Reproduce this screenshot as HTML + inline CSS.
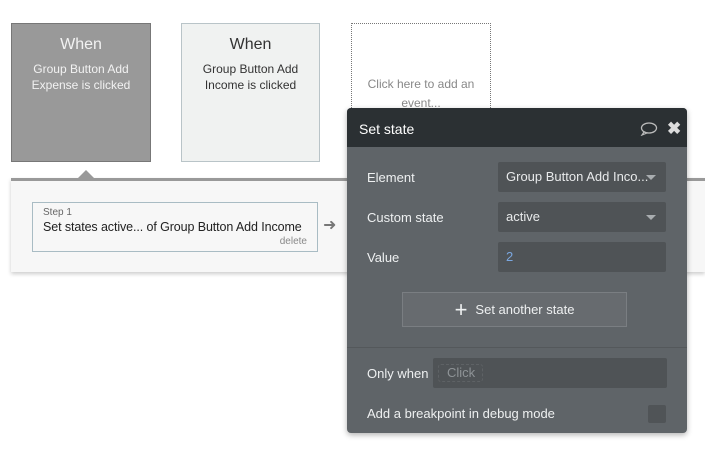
<html><head><style>
body{margin:0;width:705px;height:452px;background:#fff;font-family:"Liberation Sans",sans-serif;position:relative;overflow:hidden}
div{position:absolute;box-sizing:border-box}
.lbl{color:#eef0f1;font-size:13px;left:20px}
.inp{background:#4f5356;border-radius:2px;color:#e8eaeb;font-size:13px;padding-left:8px;line-height:30px}
.car{width:0;height:0;border-left:5px solid transparent;border-right:5px solid transparent;border-top:5px solid #a9adb0;right:10px;top:13px}
</style></head><body>
<div style="left:11px;top:23px;width:140px;height:139px;background:#999;border:1px solid #777;color:#f2f2f2;text-align:center">
<div style="left:0;right:0;top:12px;font-size:16px">When</div>
<div style="left:0;right:0;top:37px;font-size:12px;line-height:16px">Group Button Add<br>Expense is clicked</div></div>
<div style="left:181px;top:23px;width:139px;height:139px;background:#f0f2f1;border:1px solid #b9c4c8;color:#333;text-align:center">
<div style="left:0;right:0;top:12px;font-size:16px">When</div>
<div style="left:0;right:0;top:37px;font-size:12px;line-height:16px">Group Button Add<br>Income is clicked</div></div>
<div style="left:351px;top:23px;width:140px;height:139px;border:1px dotted #777;color:#888;text-align:center">
<div style="left:0;right:0;top:51px;font-size:12px;line-height:19px">Click here to add an<br>event...</div></div>
<div style="left:11px;top:178px;width:694px;height:94px;background:#f7f7f7;border-top:3px solid #999;box-shadow:0 2px 4px rgba(0,0,0,.2)"></div>
<div style="left:78px;top:170px;width:0;height:0;border-left:8px solid transparent;border-right:8px solid transparent;border-bottom:8px solid #999"></div>
<div style="left:32px;top:202px;width:286px;height:50px;border:1px solid #a9bcc4;background:#f7f7f7">
<div style="left:10px;top:4px;font-size:10px;color:#666">Step 1</div>
<div style="left:10px;top:17px;font-size:12.5px;color:#222;letter-spacing:-0.1px">Set states active... of Group Button Add Income</div>
<div style="right:10px;top:33px;font-size:10px;color:#888">delete</div></div>
<div style="left:323px;top:215px;font-size:16px;color:#777">&#10140;</div>
<div style="left:347px;top:108px;width:340px;height:325px;background:#5f6468;border-radius:4px;box-shadow:0 2px 6px rgba(0,0,0,.3);overflow:hidden">
<div style="left:0;top:0;width:340px;height:39px;background:#2b3033"><div style="left:12px;top:13px;color:#fff;font-size:14px">Set state</div>
<svg style="position:absolute;left:293px;top:14px" width="18" height="14"><ellipse cx="9" cy="6" rx="7.5" ry="5" fill="none" stroke="#bbb" stroke-width="1.3"/><path d="M4 10 L2 13 L7 11" fill="none" stroke="#bbb" stroke-width="1.2"/></svg>
<div style="left:320px;top:11px;color:#ddd;font-size:17px;font-weight:bold">&#10006;</div></div>
<div class="lbl" style="top:62px">Element</div>
<div class="inp" style="left:151px;top:54px;width:168px;height:30px">Group Button Add Inco...<div class="car"></div></div>
<div class="lbl" style="top:102px">Custom state</div>
<div class="inp" style="left:151px;top:94px;width:168px;height:30px">active<div class="car"></div></div>
<div class="lbl" style="top:142px">Value</div>
<div class="inp" style="left:151px;top:134px;width:168px;height:30px;color:#7aa7e0">2</div>
<div style="left:55px;top:184px;width:225px;height:35px;background:#676b6f;border:1px solid #7a7e82;color:#eef0f1;font-size:13px;text-align:center;line-height:33px"><span style="font-size:22px;vertical-align:-3px;margin-right:8px">+</span>Set another state</div>
<div style="left:0;top:239px;width:340px;height:1px;background:#54585b"></div>
<div class="lbl" style="top:258px">Only when</div>
<div class="inp" style="left:86px;top:250px;width:234px;height:30px;color:#8e9396">
<div style="left:5px;top:6px;height:18px;width:45px;border:1px dashed #5e6265;border-radius:3px;line-height:16px;padding-left:8px">Click</div></div>
<div class="lbl" style="top:298px">Add a breakpoint in debug mode</div>
<div style="left:301px;top:297px;width:18px;height:18px;background:#505457;border-radius:2px"></div>
</div>
</body></html>
